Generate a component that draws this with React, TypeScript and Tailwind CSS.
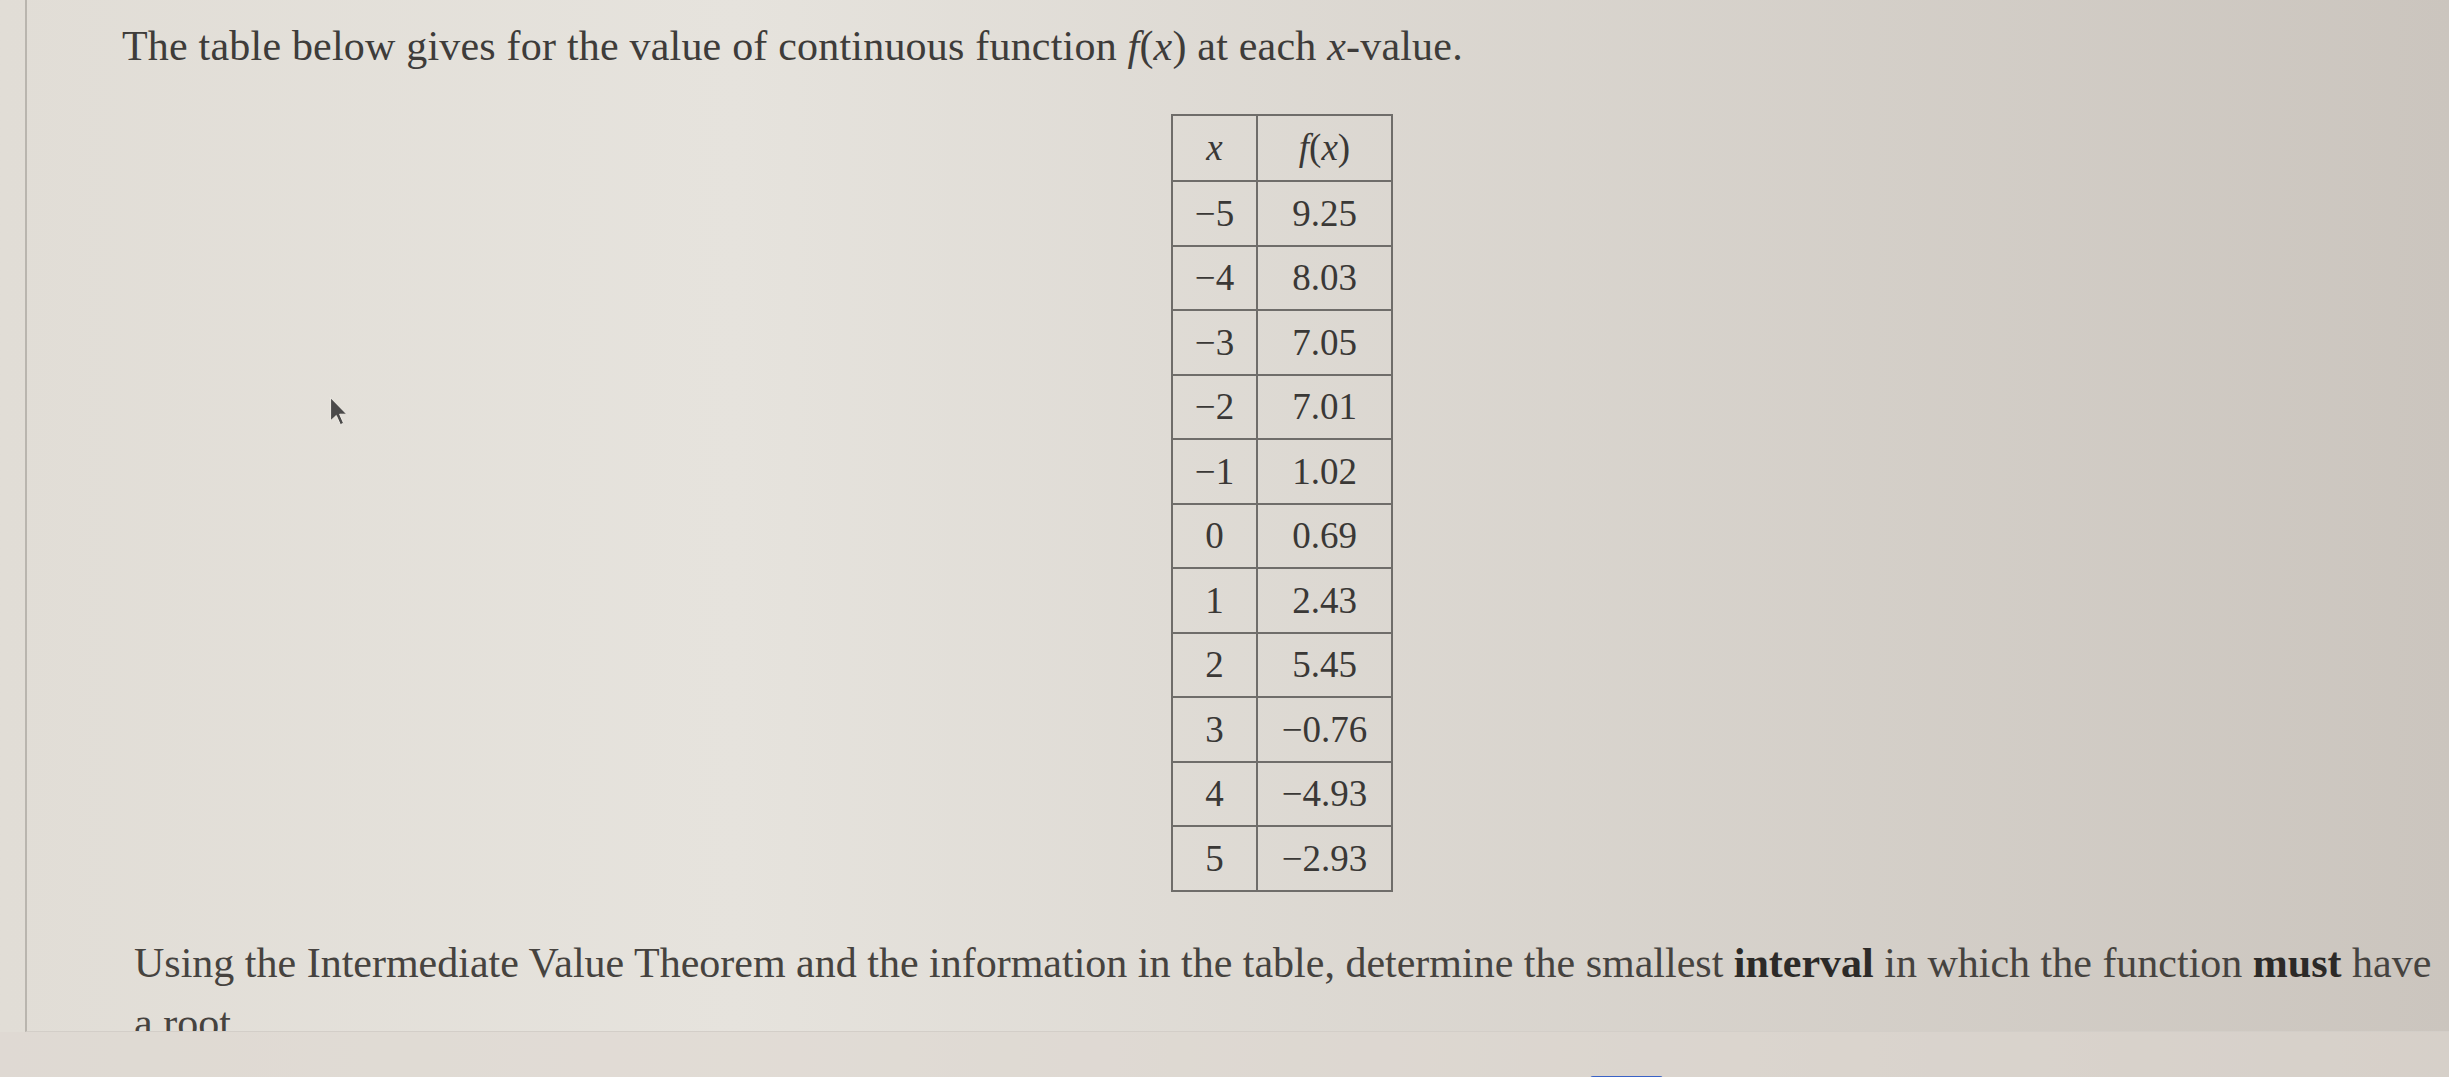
const rows: [string, string][] = [
  ['−5', '9.25'],
  ['−4', '8.03'],
  ['−3', '7.05'],
  ['−2', '7.01'],
  ['−1', '1.02'],
  ['0', '0.69'],
  ['1', '2.43'],
  ['2', '5.45'],
  ['3', '−0.76'],
  ['4', '−4.93'],
  ['5', '−2.93'],
]

function Cursor() {
  return (
    <svg
      className="absolute left-[329px] top-[396px] w-[19px] h-[32px]"
      viewBox="0 0 12 20"
      fill="#4b4a4a"
      stroke="#f3f0ea"
      strokeWidth={0.6}
    >
      <path d="M1 1 L1 15.5 L4.6 12.2 L7.2 18 L9.2 17.1 L6.7 11.4 L11.2 11.4 Z" />
    </svg>
  )
}

export default function App() {
  return (
    <div
      className="relative h-[1077px] w-full overflow-hidden flex flex-col bg-linear-to-r from-[#e1ddd6] via-[#e6e3dd] via-30% to-[#cbc5be] text-[#3e3c3a]"
      style={{ fontFamily: '"Liberation Serif", serif' }}
    >
      {/* question card */}
      <div className="ml-[25px] h-[1032px] flex-shrink-0 border-l-2 border-b border-l-[#b9b5ae] border-b-[#d3cec8] overflow-hidden">
        <p className="pl-[95px] pt-[16px] text-[42px] tracking-[0.2px] leading-[60px] whitespace-nowrap">
          The table below gives for the value of continuous function <i>f</i>(<i>x</i>) at each <i>x</i>-value.
        </p>

        <table className="mt-[38px] ml-[1144px] border-collapse border-2 border-[#6f6d6a] text-[37px] text-[#3a3836]">
          <thead>
            <tr className="h-[66px]">
              <th className="w-[85px] border-2 border-[#6f6d6a] font-normal italic">x</th>
              <th className="w-[135px] border-2 border-[#6f6d6a] font-normal">
                <i>f</i>(<i>x</i>)
              </th>
            </tr>
          </thead>
          <tbody>
            {rows.map(([x, fx]) => (
              <tr key={x} className="h-[64.5px]">
                <td className="border-2 border-[#6f6d6a] text-center">{x}</td>
                <td className="border-2 border-[#6f6d6a] text-center">{fx}</td>
              </tr>
            ))}
          </tbody>
        </table>

        <p className="mt-[41px] pl-[107px] text-[42px] leading-[60px] text-[#46433f]">
          <span className="whitespace-nowrap">
            Using the Intermediate Value Theorem and the information in the table, determine the smallest{' '}
            <b className="text-[#2c2a28]">interval</b> in which the function <b className="text-[#2c2a28]">must</b> have
          </span>
          <br />
          a root.
        </p>
      </div>

      {/* bottom strip with submit button peeking in */}
      <div className="flex-1 bg-[#ddd7d1]/60 pl-[1590px] pt-[39px]">
        <button className="w-[73px] h-[12px] rounded-t-[3px] bg-[#3a62c6]" />
      </div>

      <Cursor />
    </div>
  )
}
